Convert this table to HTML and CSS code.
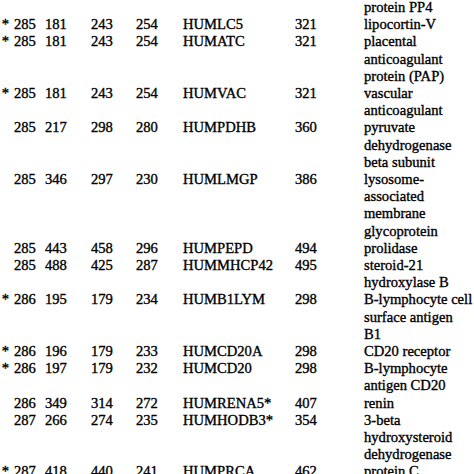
FILE: index.html
```html
<!DOCTYPE html>
<html>
<head>
<meta charset="utf-8">
<link rel="stylesheet" href="styles.css">
</head>
<body>
<div class="table">
  <div class="row"><span class="star"></span><span></span><span></span><span></span><span></span><span></span><span></span><span class="desc">protein PP4</span></div>
  <div class="row"><span class="star">*</span><span>285</span><span>181</span><span>243</span><span>254</span><span>HUMLC5</span><span>321</span><span class="desc">lipocortin-V</span></div>
  <div class="row"><span class="star">*</span><span>285</span><span>181</span><span>243</span><span>254</span><span>HUMATC</span><span>321</span><span class="desc">placental<br>anticoagulant<br>protein (PAP)</span></div>
  <div class="row"><span class="star">*</span><span>285</span><span>181</span><span>243</span><span>254</span><span>HUMVAC</span><span>321</span><span class="desc">vascular<br>anticoagulant</span></div>
  <div class="row"><span class="star"></span><span>285</span><span>217</span><span>298</span><span>280</span><span>HUMPDHB</span><span>360</span><span class="desc">pyruvate<br>dehydrogenase<br>beta subunit</span></div>
  <div class="row"><span class="star"></span><span>285</span><span>346</span><span>297</span><span>230</span><span>HUMLMGP</span><span>386</span><span class="desc">lysosome-<br>associated<br>membrane<br>glycoprotein</span></div>
  <div class="row"><span class="star"></span><span>285</span><span>443</span><span>458</span><span>296</span><span>HUMPEPD</span><span>494</span><span class="desc">prolidase</span></div>
  <div class="row"><span class="star"></span><span>285</span><span>488</span><span>425</span><span>287</span><span>HUMMHCP42</span><span>495</span><span class="desc">steroid-21<br>hydroxylase B</span></div>
  <div class="row"><span class="star">*</span><span>286</span><span>195</span><span>179</span><span>234</span><span>HUMB1LYM</span><span>298</span><span class="desc">B-lymphocyte cell<br>surface antigen<br>B1</span></div>
  <div class="row"><span class="star">*</span><span>286</span><span>196</span><span>179</span><span>233</span><span>HUMCD20A</span><span>298</span><span class="desc">CD20 receptor</span></div>
  <div class="row"><span class="star">*</span><span>286</span><span>197</span><span>179</span><span>232</span><span>HUMCD20</span><span>298</span><span class="desc">B-lymphocyte<br>antigen CD20</span></div>
  <div class="row"><span class="star"></span><span>286</span><span>349</span><span>314</span><span>272</span><span>HUMRENA5*</span><span>407</span><span class="desc">renin</span></div>
  <div class="row"><span class="star"></span><span>287</span><span>266</span><span>274</span><span>235</span><span>HUMHODB3*</span><span>354</span><span class="desc">3-beta<br>hydroxysteroid<br>dehydrogenase</span></div>
  <div class="row"><span class="star">*</span><span>287</span><span>418</span><span>440</span><span>241</span><span>HUMPRCA</span><span>462</span><span class="desc">protein C</span></div>
</div>
</body>
</html>
```
FILE: styles.css
```css
html, body {
  margin: 0;
  padding: 0;
  background: #fff;
  overflow: hidden;
  width: 474px;
  height: 474px;
}
.table {
  margin-top: -1px;
  font-family: "Liberation Serif", "Times New Roman", serif;
  font-size: 14.6px;
  line-height: 17.2px;
  color: #000;
  -webkit-text-stroke: 0.35px #000;
}
.row {
  display: grid;
  grid-template-columns: 14px 31px 46px 45px 47px 112px 69px 1fr;
  white-space: nowrap;
}
.star {
  text-align: right;
  padding-right: 5px;
}
.desc {
  overflow: visible;
}
```
